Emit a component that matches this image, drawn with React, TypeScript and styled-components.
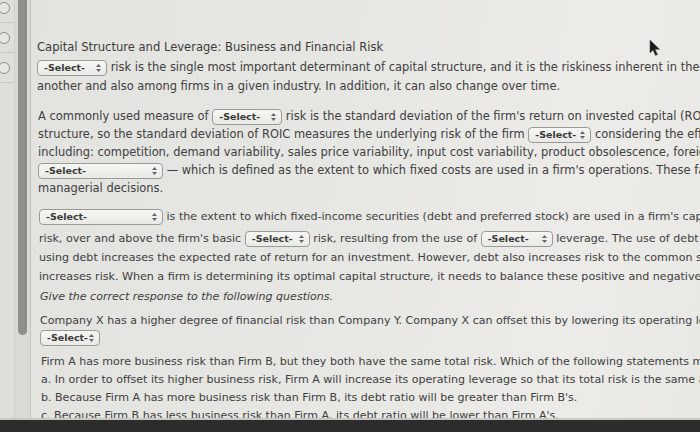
import styled, { createGlobalStyle } from "styled-components";

const Global = createGlobalStyle`
    html, body {
        margin: 0;
        padding: 0;
        overflow: hidden;
    }
    body {
        font-family: "DejaVu Sans", Verdana, sans-serif;
    }
`

function Select({ width }: { width: number }) {
    return (
        <SelectBox $width={width}>
            <span>-Select-</span>
            <svg width="5" height="8" viewBox="0 0 5 8">
                <path d="M2.5 0 L5 3 L0 3 Z M2.5 8 L5 5 L0 5 Z" fill="#666" />
            </svg>
        </SelectBox>
    )
}

function App() {
    return (
        <Page>
            <Global />
            <Main>
                <Sidebar>
                    <RadioCell><Radio /></RadioCell>
                    <RadioCell><Radio /></RadioCell>
                    <RadioCell><Radio /></RadioCell>
                </Sidebar>
                <Scroll>
                    <Thumb />
                </Scroll>
                <Content>
                    <Title>Capital Structure and Leverage: Business and Financial Risk</Title>

                    <Para $top={2} $indent={0} $lh={19} $size={11.45}>
                        <Line><Select width={70} /> risk is the single most important determinant of capital structure, and it is the riskiness inherent in the firm's operations. It varies from one industry to</Line>
                        <Line>another and also among firms in a given industry. In addition, it can also change over time.</Line>
                    </Para>

                    <Para $top={11} $indent={1} $lh={18} $size={11.45}>
                        <Line>A commonly used measure of <Select width={70} /> risk is the standard deviation of the firm's return on invested capital (ROIC). Because ROIC does not depend on capital</Line>
                        <Line>structure, so the standard deviation of ROIC measures the underlying risk of the firm <Select width={63} /> considering the effects of debt. Business risk depends on many factors</Line>
                        <Line>including: competition, demand variability, sales price variability, input cost variability, product obsolescence, foreign risk exposure, and</Line>
                        <Line><Select width={125} /> — which is defined as the extent to which fixed costs are used in a firm's operations. These factors are partly determined by</Line>
                        <Line>managerial decisions.</Line>
                    </Para>

                    <Para $top={10} $indent={2} $lh={19} $size={11.1}>
                        <Line><Select width={124} /> is the extent to which fixed-income securities (debt and preferred stock) are used in a firm's capital structure. Financial risk is the additional</Line>
                        <Line $pad={3}>risk, over and above the firm's basic <Select width={65} /> risk, resulting from the use of <Select width={72} /> leverage. The use of debt concentrates business risk on</Line>
                        <Line>using debt increases the expected rate of return for an investment. However, debt also increases risk to the common stockholders. In general,</Line>
                        <Line>increases risk. When a firm is determining its optimal capital structure, it needs to balance these positive and negative effects.</Line>
                    </Para>

                    <Para $top={2} $indent={3} $lh={18} $size={11.05}>
                        <Line><Italic>Give the correct response to the following questions.</Italic></Line>
                    </Para>

                    <Para $top={6} $indent={3} $lh={17} $size={11.05}>
                        <Line>Company X has a higher degree of financial risk than Company Y. Company X can offset this by lowering its operating leverage.</Line>
                        <Line><Select width={60} /></Line>
                    </Para>

                    <Para $top={7} $indent={4} $lh={18} $size={11.05}>
                        <Line>Firm A has more business risk than Firm B, but they both have the same total risk. Which of the following statements most likely to be true?</Line>
                        <Line>a. In order to offset its higher business risk, Firm A will increase its operating leverage so that its total risk is the same as Firm B's.</Line>
                        <Line>b. Because Firm A has more business risk than Firm B, its debt ratio will be greater than Firm B's.</Line>
                        <Line>c. Because Firm B has less business risk than Firm A, its debt ratio will be lower than Firm A's.</Line>
                    </Para>
                </Content>
                <Cursor width="12" height="18" viewBox="0 0 12 18">
                    <path d="M1 1 L1 14 L4 11 L6.5 16.5 L8.5 15.5 L6 10.3 L10.5 10.3 Z" fill="#1a1a1a" stroke="#555" strokeWidth="0.6" />
                </Cursor>
            </Main>
            <Bezel />
        </Page>
    )
}

export default App


const Page = styled.div`
    width: 700px;
    height: 432px;
    display: flex;
    flex-direction: column;
    overflow: hidden;
    background: linear-gradient(100deg, #e2e2de 0%, #e6e6e2 45%, #ecebe8 80%, #e8e8e4 100%);
`

const Main = styled.div`
    position: relative;
    flex: 1;
    display: flex;
    overflow: hidden;
    border-bottom: 2px solid #c9c9c5;
`

const Sidebar = styled.div`
    width: 14px;
    flex-shrink: 0;
    margin-top: -7px;
    border-right: 1px solid #cfcfcb;
    background: #dededa;
`

const RadioCell = styled.div`
    height: 29px;
    border-bottom: 1px solid #c8c8c4;
    display: flex;
    align-items: center;
`

const Radio = styled.div`
    width: 10px;
    height: 10px;
    margin-left: -2px;
    border-radius: 50%;
    border: 1px solid #8c8c88;
    background: #e6e6e2;
`

const Scroll = styled.div`
    width: 16px;
    flex-shrink: 0;
    background: #d9d9d5;
    border-right: 1px solid #c4c4c0;
    padding-left: 3px;
    box-sizing: border-box;
`

const Thumb = styled.div`
    width: 9px;
    height: 335px;
    background: #8e8e8a;
    border-radius: 0 0 5px 5px;
`

const Content = styled.div`
    flex: 1;
    padding: 38px 0 0 6px;
    color: #404040;
    white-space: nowrap;
    overflow: hidden;
`

const Title = styled.div`
    line-height: 18px;
    font-size: 11.55px;
    color: #3c3c3c;
`

const Para = styled.div<{ $top: number; $indent: number; $lh: number; $size: number }>`
    margin-top: ${p => p.$top}px;
    padding-left: ${p => p.$indent}px;
    line-height: ${p => p.$lh}px;
    font-size: ${p => p.$size}px;
`

const Line = styled.div<{ $pad?: number }>`
    overflow: hidden;
    margin-top: ${p => p.$pad ?? 0}px;
`

const Italic = styled.span`
    font-style: italic;
`

const SelectBox = styled.span<{ $width: number }>`
    display: inline-flex;
    align-items: center;
    justify-content: space-between;
    box-sizing: border-box;
    width: ${p => p.$width}px;
    height: 16px;
    padding: 0 5px 0 6px;
    vertical-align: middle;
    border: 1px solid #9a9a96;
    border-radius: 4px;
    background: linear-gradient(#f6f6f3, #e9e9e5);
    font-size: 9.5px;
    font-weight: bold;
    color: #3a3a3a;
    line-height: 1;
`

const Cursor = styled.svg`
    position: absolute;
    left: 649px;
    top: 39px;
`

const Bezel = styled.div`
    height: 12px;
    background: #2c2c2c;
    flex-shrink: 0;
`
